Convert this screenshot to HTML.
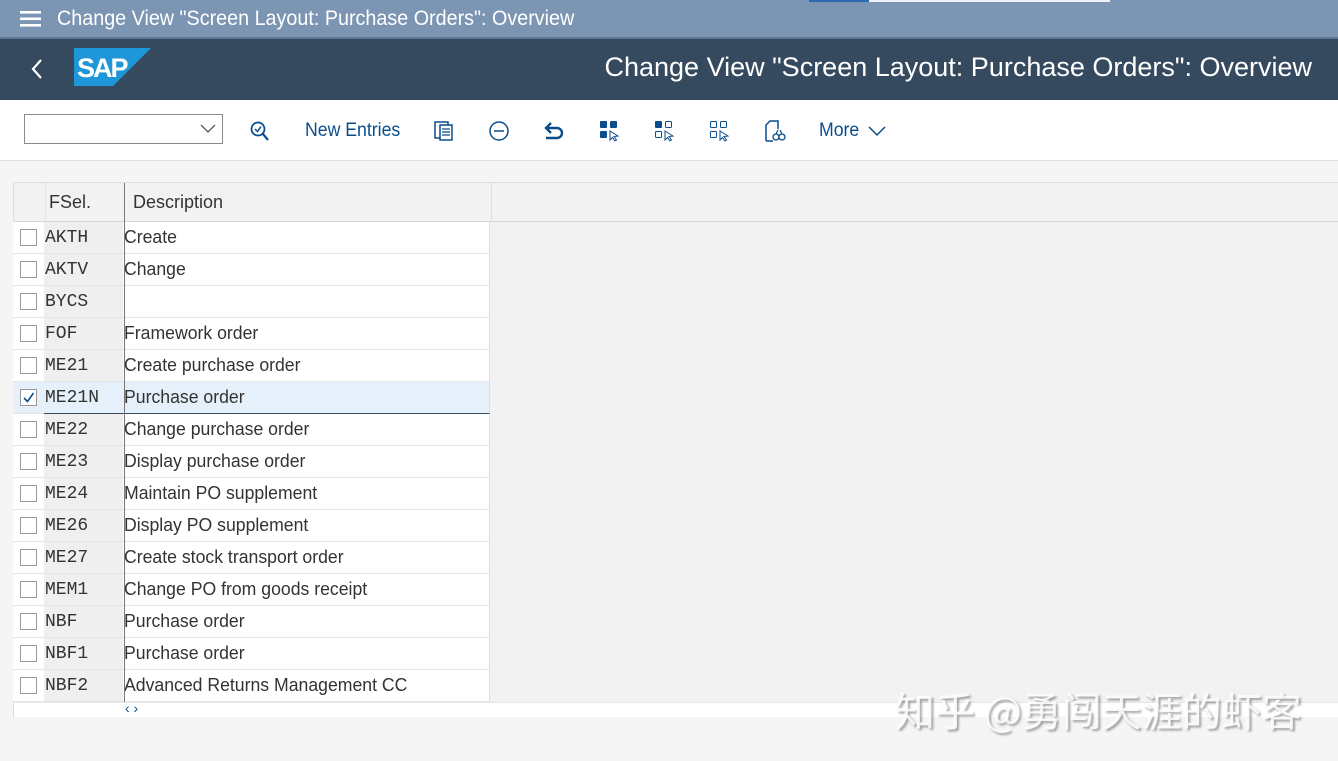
<!DOCTYPE html>
<html><head><meta charset="utf-8"><style>
*{margin:0;padding:0;box-sizing:border-box}
body{width:1338px;height:761px;overflow:hidden;background:#f5f5f5;font-family:"Liberation Sans",sans-serif;position:relative}
.c{display:inline-block;transform:scaleX(.94);transform-origin:0 50%;white-space:nowrap}
#top{position:absolute;left:0;top:0;width:1338px;height:39px;background:#7c95b3;border-bottom:2px solid #5f7896}
#top .t{position:absolute;left:57px;top:7px;font-size:21px;color:#fff}
#shell{position:absolute;left:0;top:39px;width:1338px;height:61px;background:#354a5f}
#shell .t{position:absolute;right:26px;top:13px;font-size:27px;color:#fff;white-space:nowrap}
#tb{position:absolute;left:0;top:100px;width:1338px;height:61px;background:#fff;border-bottom:1px solid #e0e0e0}
.sel{position:absolute;left:24px;top:14px;width:199px;height:30px;border:1px solid #8a8a8a;background:#fff}
.ic{position:absolute;top:20px}
.lbl{position:absolute;top:20px;font-size:19px;color:#0a4d8c}
#tbl{position:absolute;left:13px;top:182px;width:1325px;height:535px;background:#f2f2f2;border:1px solid #dcdcdc;border-right:none}
.hdr{position:absolute;left:0;top:0;height:39px;width:1325px;border-bottom:1px solid #d6d6d6}
.row{position:absolute;left:0;height:32px;width:1325px}
.cb{position:absolute;left:7px;top:7px;width:17px;height:17px;border:1px solid #999;background:#fff}
.code{position:absolute;left:31px;width:80px;top:0;height:32px;background:#efefef;border-bottom:1px solid #e6e6e6;font-family:"Liberation Mono",monospace;font-size:18px;color:#333;padding:6px 0 0 1px}
.desc{position:absolute;left:110px;width:367px;top:0;height:32px;background:#fff;border-bottom:1px solid #e6e6e6;border-right:1px solid #e0e0e0;font-size:18px;color:#333;padding:5px 0 0 1px;white-space:nowrap}
.desc span{display:inline-block;transform:scaleX(.98);transform-origin:0 50%}
.cbcol{position:absolute;left:0;width:31px;top:0;height:32px;background:#fff;border-bottom:1px solid #e6e6e6}
</style></head><body>
<div id="top">
<svg style="position:absolute;left:20px;top:11px" width="21" height="16"><rect y="0" width="21" height="2.6" fill="#fff"/><rect y="6.5" width="21" height="2.6" fill="#fff"/><rect y="13" width="21" height="2.6" fill="#fff"/></svg>
<span class="t c">Change View "Screen Layout: Purchase Orders": Overview</span>
<div style="position:absolute;left:809px;top:0;width:60px;height:2px;background:#2a6ab0"></div>
<div style="position:absolute;left:869px;top:0;width:241px;height:2px;background:#eef2f6"></div>
</div>
<div id="shell">
<svg style="position:absolute;left:30px;top:19px" width="14" height="22"><path d="M11 2 L3 11 L11 20" stroke="#fff" stroke-width="2.2" fill="none"/></svg>
<svg style="position:absolute;left:74px;top:9px" width="77" height="38"><polygon points="0,0 77,0 39,38 0,38" fill="#1d97d8"/><text x="3" y="29" font-family="Liberation Sans" font-weight="bold" font-size="27" fill="#fff" letter-spacing="-2">SAP</text></svg>
<span class="t">Change View "Screen Layout: Purchase Orders": Overview</span>
</div>
<div id="tb">
<div class="sel"><svg style="position:absolute;right:6px;top:9px" width="16" height="10"><path d="M1 1 L8 8 L15 1" stroke="#555" stroke-width="1.3" fill="none"/></svg></div>
<svg class="ic" style="left:250px" width="20" height="22"><circle cx="8" cy="9" r="6.5" stroke="#0a4d8c" stroke-width="1.8" fill="none"/><path d="M5 9 L7.5 11.5 L11 6.5" stroke="#0a4d8c" stroke-width="1.5" fill="none"/><path d="M13 14 L18 20" stroke="#0a4d8c" stroke-width="2.2"/></svg>
<span class="lbl c" style="left:305px;transform:scaleX(.93)">New Entries</span>
<svg class="ic" style="left:434px" width="20" height="22"><rect x="1" y="2" width="13" height="16" stroke="#0a4d8c" stroke-width="1.5" fill="none"/><rect x="6" y="5" width="12" height="15" stroke="#0a4d8c" stroke-width="1.5" fill="#fff"/><path d="M8 9h8M8 12h8M8 15h8" stroke="#0a4d8c" stroke-width="1.2"/></svg>
<svg class="ic" style="left:488px" width="22" height="22"><circle cx="11" cy="11" r="9" stroke="#0a4d8c" stroke-width="1.5" fill="none"/><path d="M6 11h10" stroke="#0a4d8c" stroke-width="1.5"/></svg>
<svg class="ic" style="left:544px" width="22" height="22"><path d="M7 3 L2 8 L7 13" stroke="#0a4d8c" stroke-width="2.4" fill="none"/><path d="M3 8 H13 A5 5 0 0 1 13 18 H2" stroke="#0a4d8c" stroke-width="2.4" fill="none"/></svg>
<svg class="ic" style="left:599px" width="22" height="22"><rect x="1" y="1" width="7" height="7" rx="1" fill="#0a4d8c"/><rect x="11" y="1" width="7" height="7" rx="1" fill="#0a4d8c"/><rect x="1" y="11" width="7" height="7" rx="1" fill="#0a4d8c"/><path d="M11 11 L11 20 L13.5 17.5 L16 21 L17.5 20 L15 16.5 L19 16 Z" stroke="#0a4d8c" stroke-width="1" fill="#fff"/></svg>
<svg class="ic" style="left:654px" width="22" height="22"><rect x="1" y="1" width="7" height="7" rx="1" fill="#0a4d8c"/><rect x="11.5" y="1.5" width="6" height="6" rx="1" stroke="#0a4d8c" fill="none"/><rect x="1.5" y="11.5" width="6" height="6" rx="1" stroke="#0a4d8c" fill="none"/><path d="M11 11 L11 20 L13.5 17.5 L16 21 L17.5 20 L15 16.5 L19 16 Z" stroke="#0a4d8c" stroke-width="1" fill="#fff"/></svg>
<svg class="ic" style="left:709px" width="22" height="22"><rect x="1.5" y="1.5" width="6" height="6" rx="1" stroke="#0a4d8c" fill="none"/><rect x="11.5" y="1.5" width="6" height="6" rx="1" stroke="#0a4d8c" fill="none"/><rect x="1.5" y="11.5" width="6" height="6" rx="1" stroke="#0a4d8c" fill="none"/><path d="M11 11 L11 20 L13.5 17.5 L16 21 L17.5 20 L15 16.5 L19 16 Z" stroke="#0a4d8c" stroke-width="1" fill="#fff"/></svg>
<svg class="ic" style="left:764px" width="22" height="22"><path d="M2 21 V5 L6 1 H14 V9" stroke="#0a4d8c" stroke-width="1.5" fill="none"/><path d="M2 21 H9" stroke="#0a4d8c" stroke-width="1.5"/><circle cx="12" cy="17" r="3" stroke="#0a4d8c" stroke-width="1.3" fill="none"/><circle cx="18" cy="17" r="3" stroke="#0a4d8c" stroke-width="1.3" fill="none"/><path d="M12 14 L14 10 M18 14 L16 10" stroke="#0a4d8c" stroke-width="1.2"/></svg>
<span class="lbl c" style="left:819px;transform:scaleX(.93)">More</span>
<svg class="ic" style="left:868px;top:26px" width="18" height="11"><path d="M1 1 L9 9 L17 1" stroke="#0a4d8c" stroke-width="1.5" fill="none"/></svg>
</div>
<div id="tbl">
<div class="hdr">
<div style="position:absolute;left:31px;top:0;width:80px;height:38px;border-left:1px solid #e2e2e2;border-right:1px solid #777"></div>
<span style="position:absolute;left:35px;top:9px;font-size:18px;color:#333">FSel.</span>
<span style="position:absolute;left:119px;top:9px;font-size:18px;color:#333">Description</span>
<div style="position:absolute;left:477px;top:0;height:38px;border-left:1px solid #e0e0e0"></div>
</div>
<div style="position:absolute;left:110px;top:0;width:1px;height:519px;background:#777;z-index:5"></div>
<div style="position:absolute;left:0;top:519px;width:1325px;height:15px;background:#fff;border-top:1px solid #e6e6e6"><span style="position:absolute;left:111px;top:-3px;font-size:14px;color:#0a4d8c">‹ ›</span></div>
</div>
<div id="rows" style="position:absolute;left:13px;top:222px">
</div>
<script>
var d=[["AKTH","Create"],["AKTV","Change"],["BYCS",""],["FOF","Framework order"],["ME21","Create purchase order"],["ME21N","Purchase order"],["ME22","Change purchase order"],["ME23","Display purchase order"],["ME24","Maintain PO supplement"],["ME26","Display PO supplement"],["ME27","Create stock transport order"],["MEM1","Change PO from goods receipt"],["NBF","Purchase order"],["NBF1","Purchase order"],["NBF2","Advanced Returns Management CC"]];
var h="";
d.forEach(function(r,i){var s=i==5;var bg=s?"background:#e5f0fa;":"";
h+='<div class="row" style="top:'+(i*32)+'px"><div class="cbcol" style="'+bg+'"><div class="cb">'+(s?'<svg width="15" height="15" style="position:absolute;left:0;top:0"><path d="M3 8 L6.5 11.5 L12.5 3" stroke="#0a4d8c" stroke-width="1.6" fill="none"/></svg>':'')+'</div></div><div class="code" style="'+(s?'background:#e5f0fa;border-bottom:1px solid #354a5f;':'')+'">'+r[0]+'</div><div class="desc" style="'+(s?'background:#e5f0fa;border-bottom:1px solid #354a5f;':'')+'"><span>'+r[1]+'</span></div></div>';});
document.getElementById("rows").innerHTML=h;
</script>
<div style="position:absolute;left:895px;top:680px;font-family:'Noto Sans CJK SC',sans-serif;font-size:40px;color:rgba(255,255,255,.85);text-shadow:2px 2px 2px rgba(0,0,0,.35);white-space:nowrap">知乎 @勇闯天涯的虾客</div>
</body></html>
